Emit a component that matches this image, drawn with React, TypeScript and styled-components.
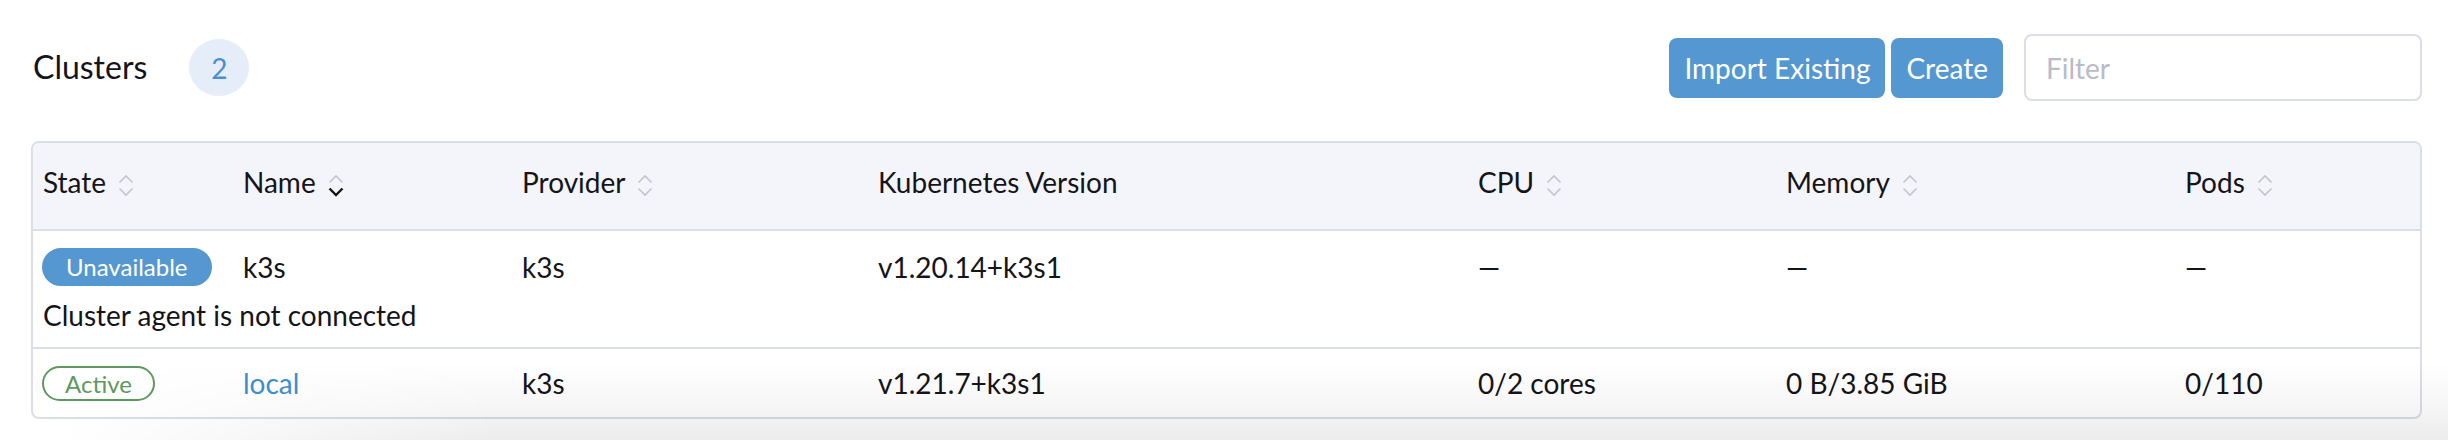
import React from 'react';
import styled, { createGlobalStyle } from 'styled-components';

const GlobalStyle = createGlobalStyle`
  html, body { margin: 0; padding: 0; background: #ffffff; }
  body {
    font-family: Lato, "Noto Sans", "Liberation Sans", sans-serif;
    color: #141419;
    -webkit-font-smoothing: antialiased;
  }
  * { box-sizing: border-box; }
`;

const Page = styled.main`
  padding: 34px 26px 0 31px;
`;

const Toolbar = styled.header`
  display: flex;
  align-items: center;
  height: 67px;
  margin-bottom: 40px;
`;

const Title = styled.h1`
  margin: 0 0 0 2px;
  font-size: 32px;
  font-weight: 400;
  line-height: 1.2;
`;

const CountBadge = styled.span`
  display: inline-flex;
  align-items: center;
  justify-content: center;
  width: 60px;
  height: 57px;
  margin-left: 42px;
  border-radius: 50%;
  background: #e4edf8;
  color: #4a90d0;
  font-size: 28px;
`;

const Actions = styled.div`
  display: flex;
  align-items: center;
  margin-left: auto;
  gap: 6px;
`;

const Button = styled.button`
  height: 60px;
  padding: 0 15px;
  border: none;
  border-radius: 8px;
  background: #5597d0;
  color: #ffffff;
  font-family: inherit;
  font-size: 28px;
  line-height: 1;
  cursor: pointer;
`;

const Filter = styled.input`
  width: 398px;
  height: 67px;
  margin-left: 15px;
  padding: 0 20px;
  border: 2px solid #dcdee7;
  border-radius: 8px;
  font-family: inherit;
  font-size: 28px;
  color: #141419;
  outline: none;
  &::placeholder { color: #b9bbc9; }
`;

const Table = styled.section`
  border: 2px solid #dcdee7;
  border-radius: 8px;
  overflow: hidden;
`;

const columns = '200px 279px 356px 600px 308px 399px 1fr';

const HeadRow = styled.div`
  display: grid;
  grid-template-columns: ${columns};
  height: 88px;
  padding-top: 22px;
  background: #f4f5fa;
  border-bottom: 2px solid #dcdee7;
`;

const HeadCell = styled.div`
  display: flex;
  align-items: flex-start;
  gap: 12px;
  padding: 0 10px;
  font-size: 28px;
  line-height: 34px;
  height: 34px;
  white-space: nowrap;
`;

const SortSvg = styled.svg`
  flex: none;
  margin-top: 9px;
`;

const Row = styled.div<{ $last?: boolean; $detail?: boolean }>`
  padding: ${(p) => (p.$detail ? '17px 0 15px' : '0')};
  border-bottom: ${(p) => (p.$last ? 'none' : '2px solid #dcdee7')};
`;

const RowMain = styled.div<{ $h: number }>`
  display: grid;
  grid-template-columns: ${columns};
  align-items: center;
  height: ${(p) => p.$h}px;
`;

const Cell = styled.div`
  padding: 0 10px;
  font-size: 28px;
  line-height: 34px;
  white-space: nowrap;
`;

const Detail = styled.div`
  margin-top: 12px;
  padding: 0 10px;
  font-size: 28px;
  line-height: 34px;
`;

const StateBadge = styled.span<{ $tone: 'info' | 'success' }>`
  display: inline-flex;
  align-items: center;
  height: ${(p) => (p.$tone === 'info' ? 38 : 35)}px;
  padding: 0 ${(p) => (p.$tone === 'info' ? 22 : 21)}px;
  margin-left: -1px;
  border-radius: 19px;
  border: 2px solid ${(p) => (p.$tone === 'info' ? '#5597d0' : '#5e9a5f')};
  background: ${(p) => (p.$tone === 'info' ? '#5597d0' : '#ffffff')};
  color: ${(p) => (p.$tone === 'info' ? '#ffffff' : '#5e9a5f')};
  font-size: 24px;
  line-height: 1;
`;

const Link = styled.a`
  color: #3f8fd2;
  text-decoration: none;
`;

const BottomShade = styled.div`
  position: fixed;
  left: 0;
  right: 0;
  bottom: 0;
  height: 78px;
  pointer-events: none;
  background: linear-gradient(to bottom, rgba(0, 0, 0, 0) 0%, rgba(0, 0, 0, 0.035) 55%, rgba(0, 0, 0, 0.075) 100%);
  -webkit-mask-image: linear-gradient(to right, transparent 60px, #000 500px);
  mask-image: linear-gradient(to right, transparent 60px, #000 500px);
`;

const SortIcon: React.FC<{ active?: boolean }> = ({ active }) => (
  <SortSvg width="16" height="23" viewBox="0 0 16 23" fill="none">
    <polyline points="1.5,8.5 8,2 14.5,8.5" stroke="#c3c4cc" strokeWidth="1.6" />
    <polyline
      points="1.5,14.5 8,21 14.5,14.5"
      stroke={active ? '#141419' : '#c3c4cc'}
      strokeWidth={active ? 2.4 : 1.6}
    />
  </SortSvg>
);

const headers: { label: string; sort: boolean; active?: boolean }[] = [
  { label: 'State', sort: true },
  { label: 'Name', sort: true, active: true },
  { label: 'Provider', sort: true },
  { label: 'Kubernetes Version', sort: false },
  { label: 'CPU', sort: true },
  { label: 'Memory', sort: true },
  { label: 'Pods', sort: true },
];

export default function App() {
  return (
    <>
      <GlobalStyle />
      <Page>
        <Toolbar>
          <Title>Clusters</Title>
          <CountBadge>2</CountBadge>
          <Actions>
            <Button>Import Existing</Button>
            <Button>Create</Button>
            <Filter placeholder="Filter" />
          </Actions>
        </Toolbar>
        <Table>
          <HeadRow>
            {headers.map((h) => (
              <HeadCell key={h.label}>
                {h.label}
                {h.sort && <SortIcon active={h.active} />}
              </HeadCell>
            ))}
          </HeadRow>
          <Row $detail>
            <RowMain $h={38}>
              <Cell>
                <StateBadge $tone="info">Unavailable</StateBadge>
              </Cell>
              <Cell>k3s</Cell>
              <Cell>k3s</Cell>
              <Cell>v1.20.14+k3s1</Cell>
              <Cell>—</Cell>
              <Cell>—</Cell>
              <Cell>—</Cell>
            </RowMain>
            <Detail>Cluster agent is not connected</Detail>
          </Row>
          <Row $last>
            <RowMain $h={68}>
              <Cell>
                <StateBadge $tone="success">Active</StateBadge>
              </Cell>
              <Cell>
                <Link href="#">local</Link>
              </Cell>
              <Cell>k3s</Cell>
              <Cell>v1.21.7+k3s1</Cell>
              <Cell>0/2 cores</Cell>
              <Cell>0 B/3.85 GiB</Cell>
              <Cell>0/110</Cell>
            </RowMain>
          </Row>
        </Table>
      </Page>
      <BottomShade />
    </>
  );
}
